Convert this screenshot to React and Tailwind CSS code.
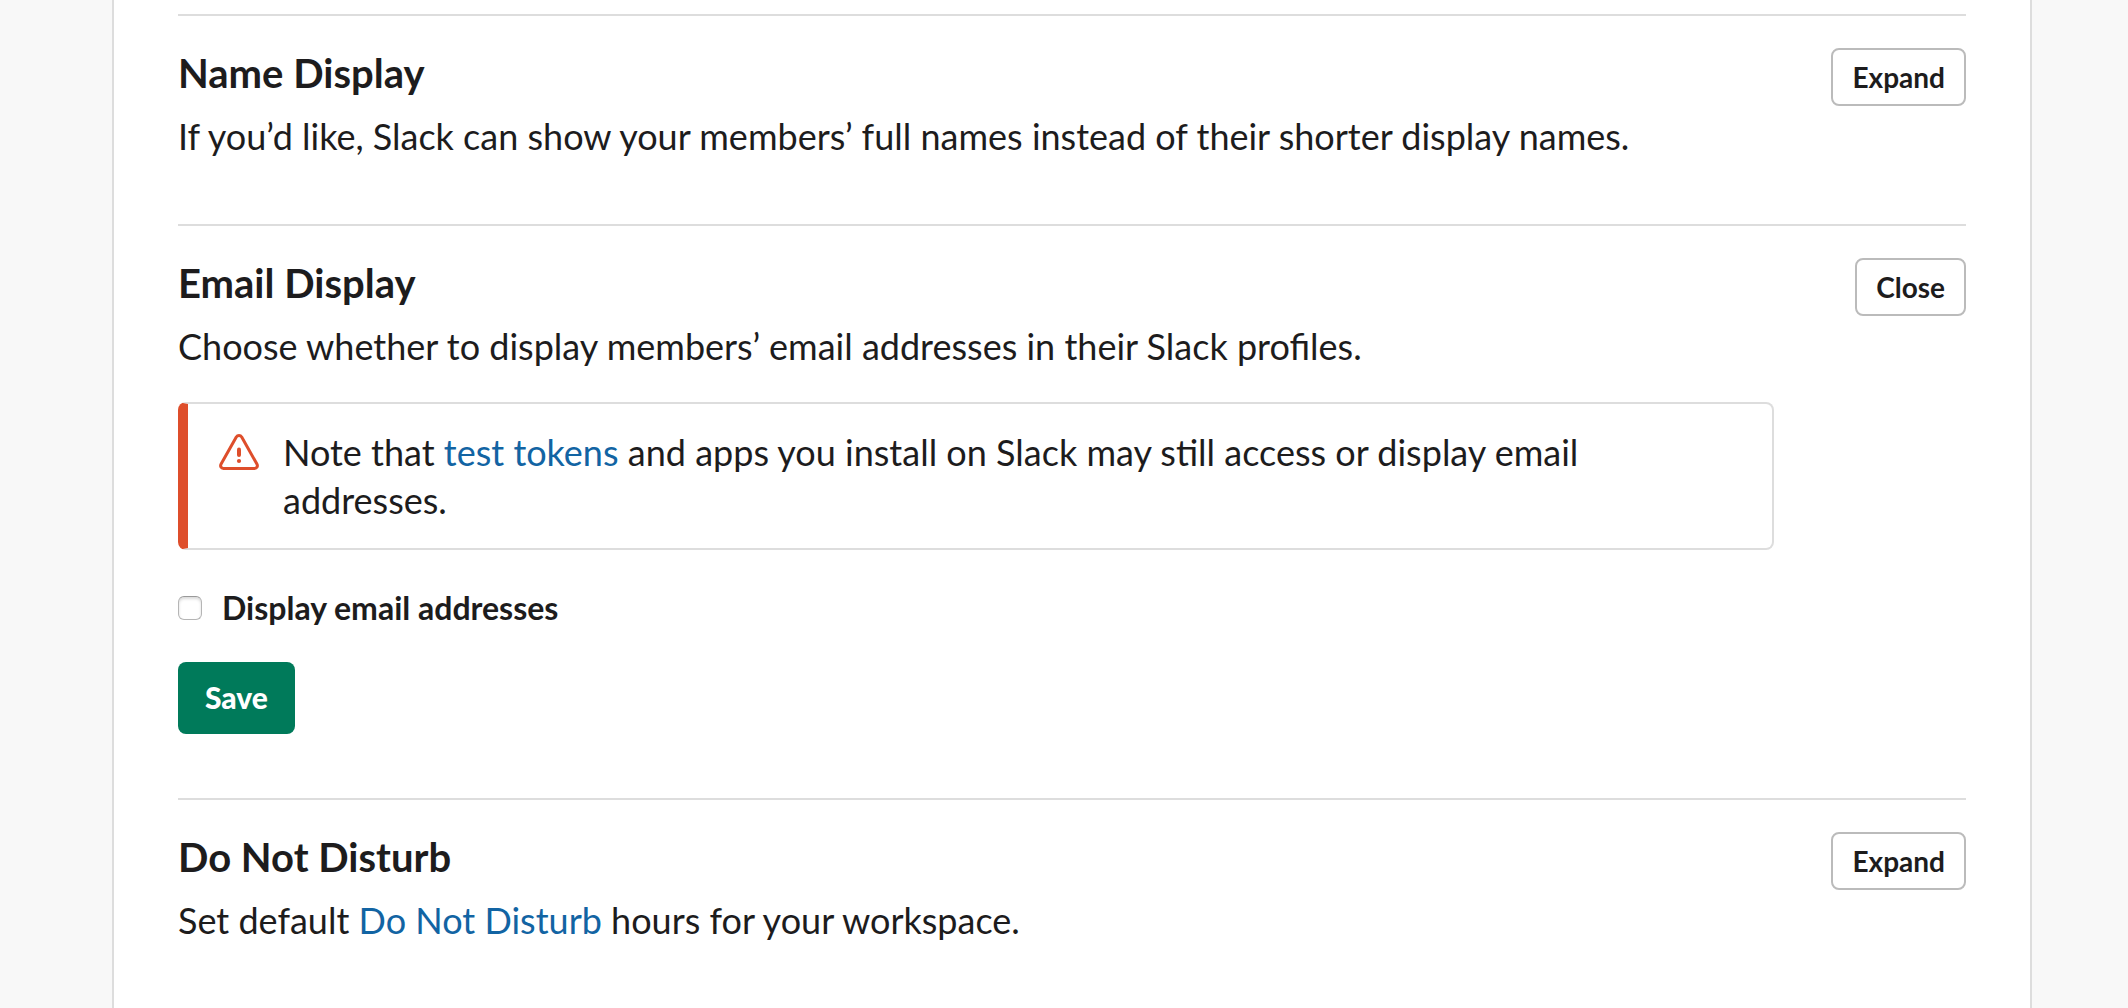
import React, { useState } from 'react';

function Section({ title, action, children }) {
  return (
    <section className="border-t-2 border-[#dddddd] pt-8 pb-16">
      <div className="mb-1.5 flex items-start justify-between">
        <h2 className="text-[40px] leading-[50px] font-bold">{title}</h2>
        <button type="button" className="h-[58px] cursor-pointer rounded-lg border-2 border-[#bbbbbb] bg-white px-[19px] text-[28px] leading-8 font-bold">
          {action}
        </button>
      </div>
      {children}
    </section>
  );
}

function WarningIcon() {
  return (
    <svg viewBox="0 0 40 36" className="mt-1.5 h-9 w-10 shrink-0" fill="none" stroke="#de4e2b" strokeWidth="3" strokeLinecap="round" strokeLinejoin="round">
      <path d="M17.3 3c1.3-2 4.1-2 5.4 0L37.9 30.1c1.2 2.1 0 4.3-2.4 4.3h-31c-2.4 0-3.6-2.2-2.4-4.3Z" />
      <path d="M20 15.5v5.5" strokeWidth="4" />
      <circle cx="20" cy="27" r="2.1" fill="#de4e2b" stroke="none" />
    </svg>
  );
}

export default function App() {
  const [showEmail, setShowEmail] = useState(false);

  return (
    <div className="min-h-screen bg-[#f8f8f8] pl-4 font-['Lato',sans-serif] text-[#1d1c1d]">
      <main className="mx-auto min-h-screen max-w-[1920px] border-x-2 border-[#dddddd] bg-white px-16 pt-3.5">
        <Section title="Name Display" action="Expand">
          <p className="text-[36px] leading-[48px]">If you’d like, Slack can show your members’ full names instead of their shorter display names.</p>
        </Section>

        <Section title="Email Display" action="Close">
          <p className="text-[36px] leading-[48px]">Choose whether to display members’ email addresses in their Slack profiles.</p>
          <div className="mt-8 flex max-w-[1596px] gap-6 rounded-lg border-2 border-l-[10px] border-[#dddddd] border-l-[#de4e2b] py-6 pr-16 pl-[31px] text-[36px] leading-[48px]">
            <WarningIcon />
            <p>
              Note that <a href="#" className="text-[#1264a3]">test tokens</a> and apps you install on Slack may still access or display email addresses.
            </p>
          </div>
          <label className="mt-9 flex w-fit items-center gap-5 text-[32px] leading-[44px] font-bold">
            <input
              type="checkbox"
              checked={showEmail}
              onChange={(e) => setShowEmail(e.target.checked)}
              className="size-6 appearance-none rounded-md border border-[#b5b5b5] border-t-[#999999] bg-white shadow-[inset_0_2px_3px_rgba(0,0,0,0.15)] checked:bg-[#1264a3]"
            />
            Display email addresses
          </label>
          <button type="button" className="mt-8 h-[72px] cursor-pointer rounded-lg bg-[#007a5a] px-[27px] pb-0.5 font-['Lato_Black','Lato',sans-serif] text-[30px] leading-9 font-black text-white">
            Save
          </button>
        </Section>

        <Section title="Do Not Disturb" action="Expand">
          <p className="text-[36px] leading-[48px]">
            Set default <a href="#" className="text-[#1264a3]">Do Not Disturb</a> hours for your workspace.
          </p>
        </Section>
      </main>
    </div>
  );
}
